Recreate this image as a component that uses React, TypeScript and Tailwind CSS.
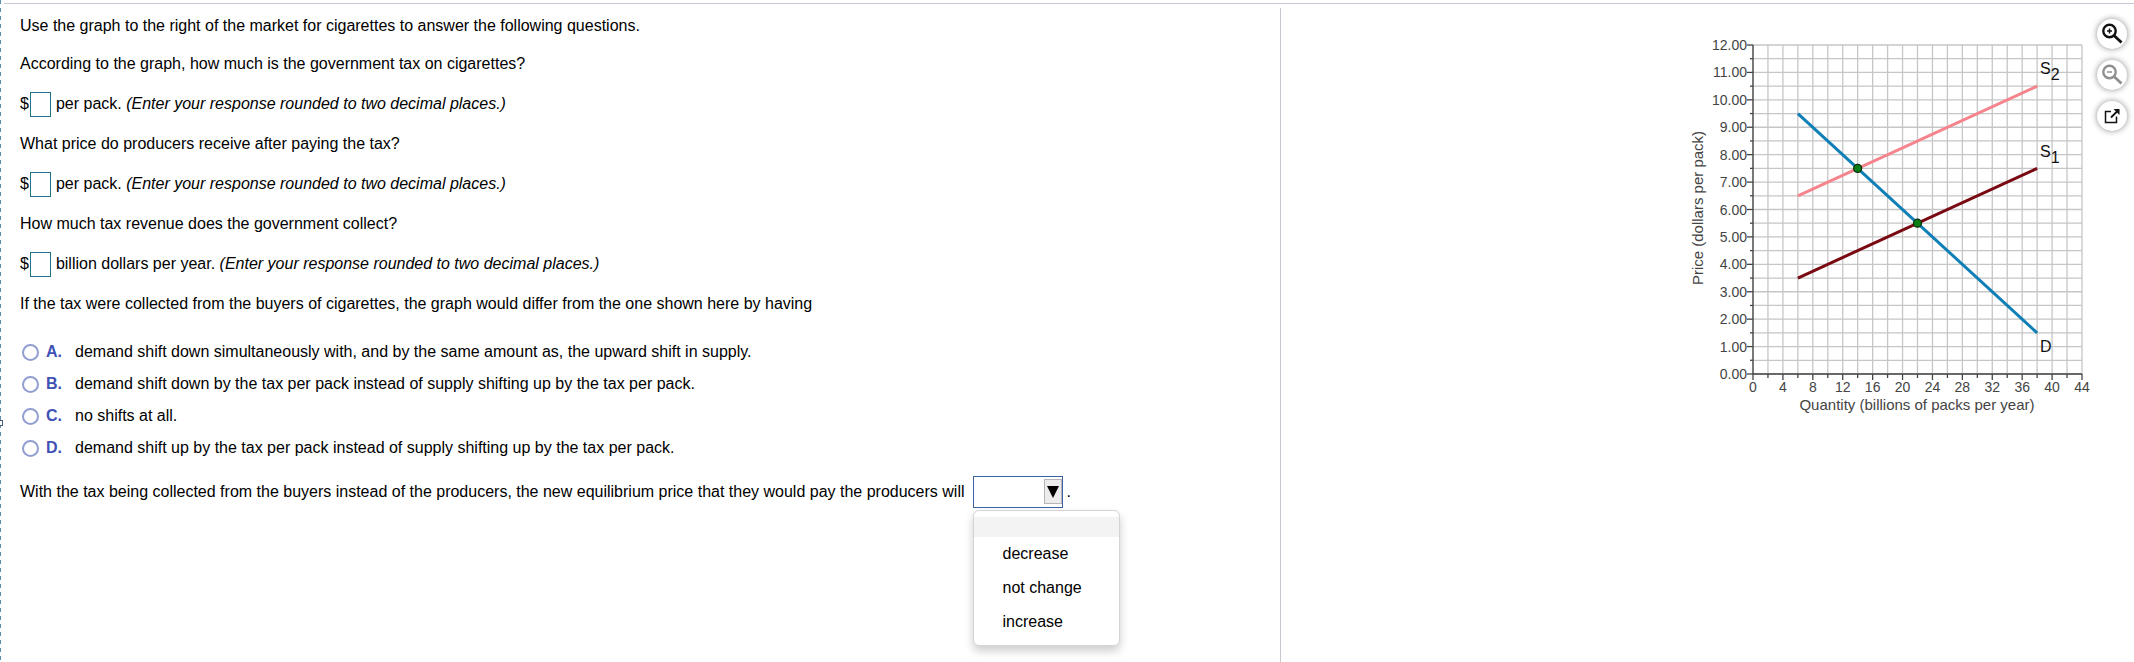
import { useState } from "react";

const PLOT = { left: 68, top: 15, size: 329 };

const px = (q: number) => PLOT.left + (q / 44) * PLOT.size;
const py = (p: number) => PLOT.top + (1 - p / 12) * PLOT.size;

const range = (count: number) => Array.from({ length: count }, (_, i) => i);

const curves = [
  { id: "s2", color: "#f5848c", from: [6, 6.5], to: [38, 10.5] },
  { id: "s1", color: "#7a0a12", from: [6, 3.5], to: [38, 7.5] },
  { id: "d", color: "#0f7fb5", from: [6, 9.5], to: [38, 1.5] },
];

const equilibria = [
  [14, 7.5],
  [22, 5.5],
];

/** Supply and demand for cigarettes, before (S1) and after (S2) the tax. */
function MarketGraph() {
  const bottom = PLOT.top + PLOT.size;
  const right = PLOT.left + PLOT.size;
  return (
    <svg width="410" height="390" viewBox="0 0 410 390" role="img" aria-label="Market for cigarettes">
      <g stroke="#c6c6c6" strokeWidth="1.3">
        {range(23).map((i) => (
          <line key={`v${i}`} x1={px(i * 2)} x2={px(i * 2)} y1={PLOT.top} y2={bottom} />
        ))}
        {range(25).map((i) => (
          <line key={`h${i}`} x1={PLOT.left} x2={right} y1={py(i / 2)} y2={py(i / 2)} />
        ))}
      </g>
      <g stroke="#444" strokeWidth="1.3">
        <line x1={PLOT.left} x2={PLOT.left} y1={PLOT.top} y2={bottom} />
        <line x1={PLOT.left} x2={right} y1={bottom} y2={bottom} />
        {range(25).map((i) => (
          <line key={`y${i}`} x1={PLOT.left - (i % 2 ? 3 : 6)} x2={PLOT.left} y1={py(i / 2)} y2={py(i / 2)} />
        ))}
        {range(23).map((i) => (
          <line key={`x${i}`} x1={px(i * 2)} x2={px(i * 2)} y1={bottom} y2={bottom + (i % 2 ? 4 : 6)} />
        ))}
      </g>
      <g fill="#444" fontSize="14">
        {range(13).map((i) => (
          <text key={i} x={PLOT.left - 6} y={py(i) + 5} textAnchor="end">
            {i.toFixed(2)}
          </text>
        ))}
        {range(12).map((i) => (
          <text key={i} x={px(i * 4)} y={bottom + 18} textAnchor="middle">
            {i * 4}
          </text>
        ))}
        <text x="232" y="380" fontSize="15" textAnchor="middle">
          Quantity (billions of packs per year)
        </text>
        <text transform="translate(18 178) rotate(-90)" fontSize="15" textAnchor="middle">
          Price (dollars per pack)
        </text>
      </g>
      {curves.map((c) => (
        <line
          key={c.id}
          x1={px(c.from[0])}
          y1={py(c.from[1])}
          x2={px(c.to[0])}
          y2={py(c.to[1])}
          stroke={c.color}
          strokeWidth="3"
        />
      ))}
      {equilibria.map(([q, p]) => (
        <circle key={q} cx={px(q)} cy={py(p)} r="4" fill="#0a7d14" stroke="#0b2b0e" strokeWidth="1.2" />
      ))}
      <g fill="#111" fontSize="16">
        <text x="355" y="44">
          S<tspan dy="6">2</tspan>
        </text>
        <text x="355" y="127">
          S<tspan dy="6">1</tspan>
        </text>
        <text x="355" y="322">D</text>
      </g>
    </svg>
  );
}

function Magnifier({ plus = false }: { plus?: boolean }) {
  return (
    <svg width="22" height="22" viewBox="0 0 22 22" fill="none" stroke="currentColor" aria-hidden="true">
      <circle cx="8.5" cy="8" r="6.2" strokeWidth="2.4" />
      <path d="M6 8h5" strokeWidth="1.5" />
      {plus && <path d="M8.5 5.5v5" strokeWidth="1.5" />}
      <path d="M13 12.5l7.5 7" strokeWidth="2.8" />
    </svg>
  );
}

function PopOut() {
  return (
    <svg width="18" height="18" viewBox="0 0 18 18" fill="none" stroke="currentColor" aria-hidden="true">
      <path d="M8 4.5H2.5v11h11v-6" strokeWidth="1.5" />
      <path d="M8 10.5L14 4.5" strokeWidth="1.8" />
      <path d="M10.5 2H16.5V8z" fill="currentColor" stroke="none" />
    </svg>
  );
}

const tools = [
  { label: "Zoom in", icon: <Magnifier plus />, className: "text-[#111]" },
  { label: "Zoom out", icon: <Magnifier />, className: "text-[#8f8f8f]" },
  { label: "Open in new window", icon: <PopOut />, className: "text-[#111]" },
];

function GraphTools() {
  return (
    <div className="flex flex-col gap-[11px]">
      {tools.map((t) => (
        <button
          key={t.label}
          type="button"
          aria-label={t.label}
          className={`flex size-[30px] items-center justify-center rounded-full bg-white shadow-[0_0_6px_rgba(0,0,0,0.45)] ${t.className}`}
        >
          {t.icon}
        </button>
      ))}
    </div>
  );
}

const blanks = [
  { id: "tax", question: "According to the graph, how much is the government tax on cigarettes?", unit: "per pack." },
  { id: "price", question: "What price do producers receive after paying the tax?", unit: "per pack." },
  { id: "revenue", question: "How much tax revenue does the government collect?", unit: "billion dollars per year." },
];

const choices = [
  { letter: "A", text: "demand shift down simultaneously with, and by the same amount as, the upward shift in supply." },
  { letter: "B", text: "demand shift down by the tax per pack instead of supply shifting up by the tax per pack." },
  { letter: "C", text: "no shifts at all." },
  { letter: "D", text: "demand shift up by the tax per pack instead of supply shifting up by the tax per pack." },
];

const effects = ["", "decrease", "not change", "increase"];

function EffectSelect() {
  const [effect, setEffect] = useState("");
  return (
    <div className="relative ml-2">
      <select
        id="effect"
        value={effect}
        onChange={(e) => setEffect(e.target.value)}
        className="block h-8 w-[90px] appearance-none border border-[#3d62a8] bg-white pl-2"
      >
        {effects.map((e) => (
          <option key={e} value={e}>
            {e}
          </option>
        ))}
      </select>
      <span className="pointer-events-none absolute top-[3px] right-px flex h-[25px] w-[18px] items-center justify-center border border-[#b5b5b5] bg-[#ececec]">
        <svg width="12" height="12" viewBox="0 0 12 12" aria-hidden="true">
          <path d="M0 0h12L6 12z" fill="#000" />
        </svg>
      </span>
      <ul
        role="listbox"
        aria-label="Effect on price"
        className="absolute top-[34px] left-0 w-[147px] rounded-md border border-[#d5d5d5] bg-white py-1.5 shadow-[0_5px_10px_rgba(0,0,0,0.2)]"
      >
        {effects.map((e) => (
          <li key={e} role="option" aria-selected={e === effect}>
            <button
              type="button"
              onClick={() => setEffect(e)}
              className={`block w-full pl-[29px] text-left ${e === "" ? "h-5 bg-[#f3f3f3]" : "h-[34px]"}`}
            >
              {e}
            </button>
          </li>
        ))}
      </ul>
    </div>
  );
}

function Questions() {
  return (
    <main className="w-3/5 pt-3 pl-5">
      <p className="leading-5">
        Use the graph to the right of the market for cigarettes to answer the following questions.
      </p>
      <div className="mt-2">
        {blanks.map((b) => (
          <div key={b.id}>
            <label htmlFor={b.id} className="flex h-10 items-center">
              {b.question}
            </label>
            <div className="flex h-10 items-center">
              $
              <input id={b.id} type="text" className="mr-[5px] ml-px h-[25px] w-[21px] border border-[#1f7288]" />
              <span>
                {b.unit} <em>(Enter your response rounded to two decimal places.)</em>
              </span>
            </div>
          </div>
        ))}
      </div>
      <fieldset>
        <legend className="flex h-10 items-center">
          If the tax were collected from the buyers of cigarettes, the graph would differ from the one shown here by
          having
        </legend>
        <div className="mt-3">
          {choices.map((c) => (
            <label key={c.letter} className="flex h-8 items-center">
              <input
                type="radio"
                name="shift"
                value={c.letter}
                className="mx-[2px] size-[17px] appearance-none rounded-full border-2 border-[#929dd0] checked:bg-[#3f51b5]"
              />
              <span className="ml-[5px] w-[29px] font-bold text-[#3f51b5]">{c.letter}.</span>
              {c.text}
            </label>
          ))}
        </div>
      </fieldset>
      <div className="mt-3 flex items-center">
        <label htmlFor="effect">
          With the tax being collected from the buyers instead of the producers, the new equilibrium price that they
          would pay the producers will
        </label>
        <EffectSelect />
        <span className="ml-1">.</span>
      </div>
    </main>
  );
}

export default function App() {
  return (
    <div className="relative flex min-h-screen flex-col bg-white font-['Liberation_Sans',Arial,sans-serif] text-[16px] text-black">
      <div className="absolute inset-y-0 left-0 w-px bg-[repeating-linear-gradient(to_bottom,#5a8cab_0_4px,transparent_4px_8px)]" />
      <div className="absolute top-[420px] left-0 h-[6px] w-[3px] border border-l-0 border-[#4a5a78] bg-white" />
      <div className="mt-[3px] ml-1 h-px bg-[#c5cad6]" />
      <div className="flex grow">
        <Questions />
        <aside className="mt-1 flex grow items-start justify-end gap-[2px] border-l border-[#c8c8d0] pr-[7px]">
          <div className="pt-[22px]">
            <MarketGraph />
          </div>
          <div className="pt-[11px]">
            <GraphTools />
          </div>
        </aside>
      </div>
    </div>
  );
}
